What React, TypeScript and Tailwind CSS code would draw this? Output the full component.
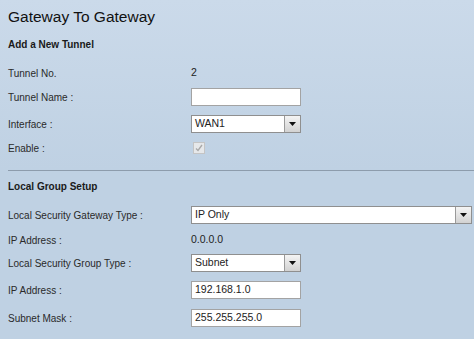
import React from "react"

const font = { fontFamily: '"Liberation Sans", Arial, sans-serif' }

function Arrow() {
  return (
    <div className="flex h-full w-[16px] items-center justify-center border-l border-[#9a9a9a] bg-gradient-to-b from-[#f4f4f4] to-[#d2d2d2]">
      <svg width="7" height="4" viewBox="0 0 7 4">
        <path d="M0 0H7L3.5 4Z" fill="#111" />
      </svg>
    </div>
  )
}

function Select({ value, width }: { value: string; width: string }) {
  return (
    <div className={`flex h-[18px] items-center border border-[#8f8f8f] bg-white ${width}`}>
      <span className="flex-1 pl-[3px] text-[10.5px] text-[#222]">{value}</span>
      <Arrow />
    </div>
  )
}

function Input({ value = "" }: { value?: string }) {
  return (
    <div className="flex h-[18px] w-[110px] items-center border border-[#a3a3a3] bg-white pl-[3px] text-[10.5px] text-[#222]">
      {value}
    </div>
  )
}

function Row({ label, h, children }: { label: string; h: string; children?: React.ReactNode }) {
  return (
    <div className={`flex items-center ${h}`}>
      <div className="w-[191px] shrink-0 pl-[8px] text-[10px] text-[#2a2a2a]">{label}</div>
      <div className="flex flex-1 items-center">{children}</div>
    </div>
  )
}

export default function App() {
  return (
    <div
      className="h-[339px] w-[474px] overflow-hidden bg-gradient-to-b from-[#cbdaea] via-[#bfd1e3] to-[#bfd1e3]"
      style={font}
    >
      <div className="flex h-[34px] items-center pl-[8px] text-[15.5px] text-[#111]">Gateway To Gateway</div>
      <div className="flex h-[20px] items-center pl-[8px] text-[10px] font-bold text-[#1a1a1a]">Add a New Tunnel</div>
      <div className="h-[7px]" />
      <Row label="Tunnel No." h="h-[24px]">
        <span className="text-[10.5px] text-[#222]">2</span>
      </Row>
      <Row label="Tunnel Name :" h="h-[24px]">
        <Input />
      </Row>
      <Row label="Interface :" h="h-[30px]">
        <Select value="WAN1" width="w-[110px]" />
      </Row>
      <Row label="Enable :" h="h-[18px]">
        <div className="ml-[2px] flex h-[12px] w-[12px] items-center justify-center border border-[#c4c4c4] bg-[#e6e8ea]">
          <svg width="8" height="8" viewBox="0 0 8 8">
            <path d="M1 4.5L3 6.5L7 1" stroke="#a8a8a8" strokeWidth="1.3" fill="none" />
          </svg>
        </div>
      </Row>
      <div className="h-[13px]" />
      <div className="ml-[8px] h-[2px] border-t border-[#8d9cac] border-b-[#d3e0ec]" />
      <div className="h-[4px]" />
      <div className="flex h-[20px] items-center pl-[8px] text-[10px] font-bold text-[#1a1a1a]">Local Group Setup</div>
      <div className="h-[7px]" />
      <Row label="Local Security Gateway Type :" h="h-[24px]">
        <Select value="IP Only" width="w-[281px]" />
      </Row>
      <Row label="IP Address :" h="h-[26px]">
        <span className="text-[10.5px] text-[#222]">0.0.0.0</span>
      </Row>
      <Row label="Local Security Group Type :" h="h-[20px]">
        <Select value="Subnet" width="w-[110px]" />
      </Row>
      <Row label="IP Address :" h="h-[34px]">
        <Input value="192.168.1.0" />
      </Row>
      <Row label="Subnet Mask :" h="h-[22px]">
        <Input value="255.255.255.0" />
      </Row>
    </div>
  )
}
